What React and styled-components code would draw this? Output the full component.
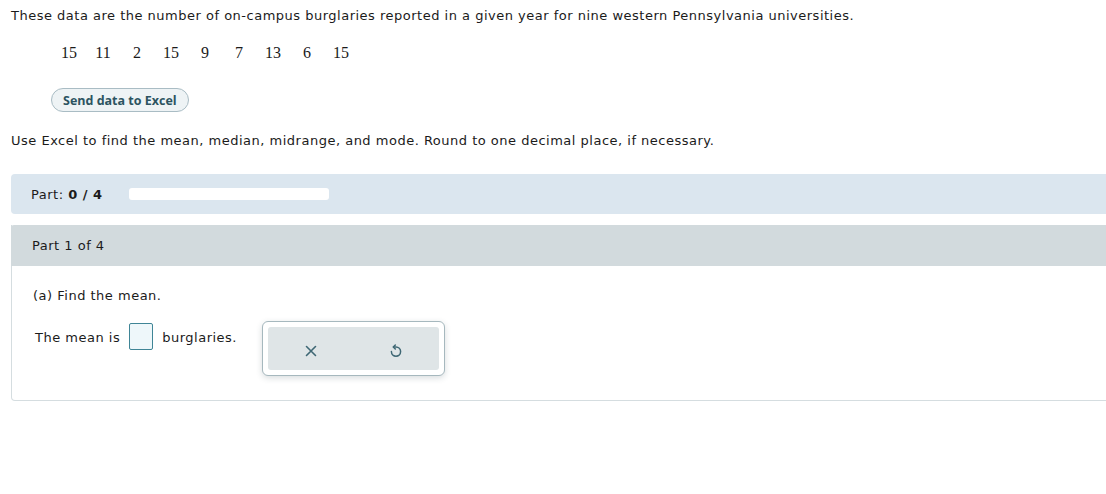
import styled, { createGlobalStyle } from "styled-components"

const GlobalStyle = createGlobalStyle`
  body {
    margin: 0;
    background: #ffffff;
    overflow: hidden;
    font-family: "DejaVu Sans", Verdana, sans-serif;
    color: #1b1b1b;
  }
`

const Page = styled.main`
  width: 1130px;
  padding: 8px 0 0 11px;
  font-size: 13px;
  letter-spacing: 0.5px;
`

const Text = styled.p`
  margin: ${(p) => p.$top || 0}px 0 0;
  line-height: 16px;
`

const DataRow = styled.div`
  display: grid;
  grid-template-columns: repeat(9, 34px);
  margin: 21px 0 0 41px;
  font-family: "Liberation Serif", "Times New Roman", serif;
  font-size: 16px;
  line-height: 16px;
  letter-spacing: 0;
  text-align: center;
`

const ExcelButton = styled.button`
  display: block;
  margin: 27px 0 0 40px;
  height: 24px;
  padding: 0 11px;
  border: 1px solid #a9bcc4;
  border-radius: 12px;
  background: #eef3f5;
  color: #2c5461;
  font-family: "Open Sans", Lato, sans-serif;
  font-weight: 700;
  font-size: 12.5px;
  letter-spacing: 0;
`

const PartBar = styled.div`
  display: flex;
  align-items: center;
  gap: 26px;
  height: 40px;
  margin-top: 25px;
  padding-left: 20px;
  background: #dbe6ef;
  border-radius: 4px;
`

const Progress = styled.div`
  width: 200px;
  height: 12px;
  background: #ffffff;
  border-radius: 3px;
`

const Card = styled.section`
  margin-top: 11px;
  border: 1px solid #d5dde0;
  border-top: none;
  border-radius: 0 0 4px 4px;
`

const CardHeader = styled.div`
  display: flex;
  align-items: center;
  height: 41px;
  margin: 0 -1px;
  padding-left: 21px;
  background: #d2dadd;
  border-radius: 3px 3px 0 0;
`

const CardBody = styled.div`
  padding: 22px 0 24px 21px;
`

const AnswerRow = styled.div`
  display: flex;
  align-items: flex-start;
  margin-top: 17px;
`

const Statement = styled.div`
  display: flex;
  align-items: center;
  gap: 8px;
  margin-top: 2px;
  padding-left: 2px;
  height: 27px;
  line-height: 16px;
`

const Words = styled.span`
  padding-top: 2px;
`

const Blank = styled.span`
  width: 22px;
  height: 25px;
  border: 1px solid #3f8596;
  border-radius: 2px;
  background: #eef7fa;
  margin: 0 1px;
`

const ToolBox = styled.div`
  margin-left: 25px;
  padding: 5px;
  border: 1px solid #a6b8be;
  border-radius: 6px;
  background: #ffffff;
  box-shadow: 0 2px 6px rgba(40, 60, 70, 0.18);
`

const ToolInner = styled.div`
  display: flex;
  width: 171px;
  height: 43px;
  background: #dfe5e7;
  border-radius: 3px;
`

const ToolButton = styled.button`
  flex: 1;
  display: flex;
  align-items: center;
  justify-content: center;
  padding: 4px 0 0;
  border: none;
  background: transparent;
  color: #3e6774;
`

const CloseIcon = () => (
  <svg width="14" height="14" viewBox="0 0 14 14" fill="none" stroke="currentColor" strokeWidth="1.6" strokeLinecap="round">
    <path d="M2.5 2.5 L11.5 11.5 M11.5 2.5 L2.5 11.5" />
  </svg>
)

const UndoIcon = () => (
  <svg width="14" height="16" viewBox="0 0 14 16" fill="none" stroke="currentColor" strokeWidth="1.5" strokeLinecap="round" strokeLinejoin="round">
    <path d="M4.5 4 H7 A4.6 4.6 0 1 1 2.4 8.6" />
    <path d="M6.3 2 L4.3 4 L6.3 6" />
  </svg>
)

const values = [15, 11, 2, 15, 9, 7, 13, 6, 15]

export default function App() {
  return (
    <Page>
      <GlobalStyle />
      <Text>
        These data are the number of on-campus burglaries reported in a given year for nine western Pennsylvania universities.
      </Text>
      <DataRow>
        {values.map((v, i) => (
          <span key={i}>{v}</span>
        ))}
      </DataRow>
      <ExcelButton>Send data to Excel</ExcelButton>
      <Text $top={21}>
        Use Excel to find the mean, median, midrange, and mode. Round to one decimal place, if necessary.
      </Text>
      <PartBar>
        <span>
          Part: <strong>0 / 4</strong>
        </span>
        <Progress />
      </PartBar>
      <Card>
        <CardHeader>Part 1 of 4</CardHeader>
        <CardBody>
          <Text>(a) Find the mean.</Text>
          <AnswerRow>
            <Statement>
              <Words>The mean is</Words>
              <Blank />
              <Words>burglaries.</Words>
            </Statement>
            <ToolBox>
              <ToolInner>
                <ToolButton aria-label="clear">
                  <CloseIcon />
                </ToolButton>
                <ToolButton aria-label="undo">
                  <UndoIcon />
                </ToolButton>
              </ToolInner>
            </ToolBox>
          </AnswerRow>
        </CardBody>
      </Card>
    </Page>
  )
}
